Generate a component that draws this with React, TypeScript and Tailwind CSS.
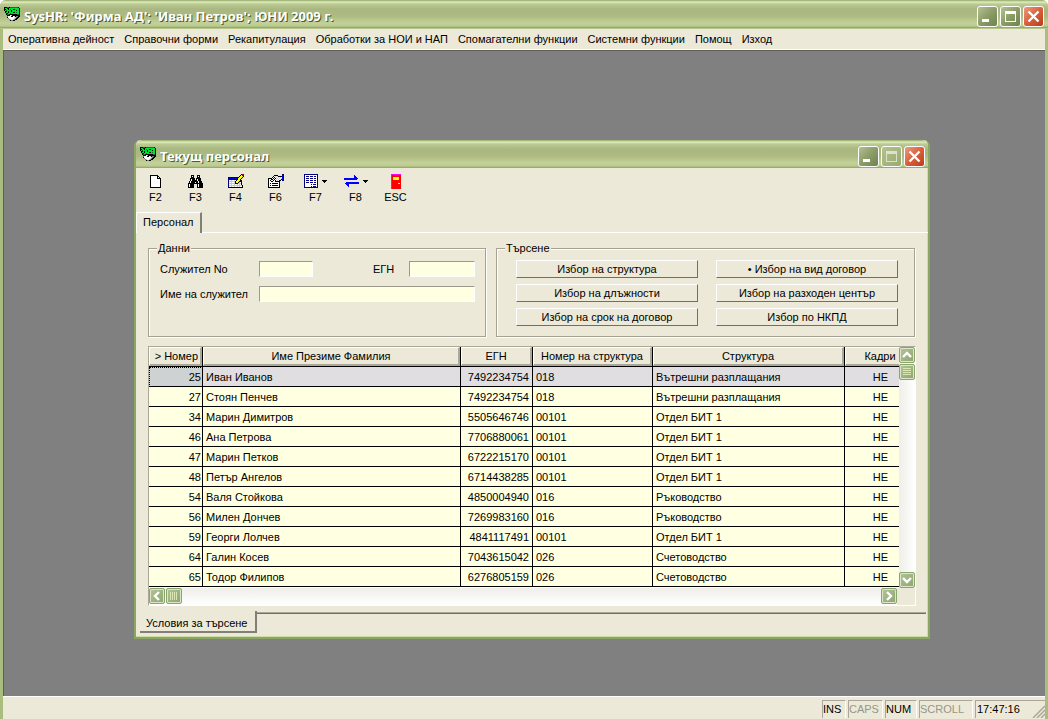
import React from 'react';
import clsx from 'clsx';

const PALETTE: Record<string, string> = {
  k: '#000000',
  w: '#ffffff',
  n: '#000080',
  b: '#0000ff',
  g: '#00e030',
  d: '#008020',
  s: '#808080',
  l: '#c8c8c8',
  y: '#ffff00',
  r: '#ff0000',
  m: '#ff00ff',
  p: '#800040',
};

const APP = [
  'kkkddkddddddddk.',
  'kggkkggggggggggk',
  'kkggkgdggkkggggk',
  'kgdggggkggggkggk',
  '.kkgkggkgggggggk',
  '.kggkggggkkgdggk',
  '..kkggdggggggggk',
  '..kddkkkkkkkkddk',
  '...kkkwlkkkkkkkk',
  '...swwwkkwlksskk',
  '...kwwwwwwwlskk.',
  '....swwwwwlskk..',
  '.....slwwlskk...',
  '......ksskk.....',
];

const PAGE = [
  'kkkkkkkk...',
  'kwwwwwwkk..',
  'kwwwwwwkwk.',
  'kwwwwwwkkkk',
  'kwwwwwwwwwk',
  'kwwwwwwwwwk',
  'kwwwwwwwwwk',
  'kwwwwwwwwwk',
  'kwwwwwwwwwk',
  'kwwwwwwwwwk',
  'kwwwwwwwwwk',
  'kwwwwwwwwwk',
  'kkkkkkkkkkk',
];

const FIND = [
  '...kkk...kkk...',
  '...kwk...kwk...',
  '...kkk...kkk...',
  '..kkkkk.kkkkk..',
  '..kwkkk.kwkkk..',
  '..kwkkkkkwkkk..',
  '.kwkkkkkkkwkkk.',
  '.kwkkkkwkkwkkk.',
  'kkkkkkkkkkkkkkk',
  'kwkkkk...kwkkkk',
  'kwkkkk...kwkkkk',
  'kwkkkk...kwkkkk',
  'kkkkkk...kkkkkk',
];

const EDIT = [
  '.............kpp',
  '............kypp',
  '...........kyyyk',
  'nnnnnnnnnnkyyyk.',
  'nbbnbbnbbkyyyk..',
  'nnnnnnnnnkyyk...',
  'nwwlwwlwkyyykn..',
  'nllllllkyyyknn..',
  'nwwlwwlkyyklwn..',
  'nllllllkkklllk..',
  'nwwlwwlwwlwlwk..',
  'nlllllllllllllk.',
  'nwwlwwlwwlwlwwk.',
  'kkkkkkkkkkkkkkk.',
];

const PROPS = [
  '..............nn',
  '......kkkk....bn',
  '.....kwlwlkkkkbn',
  '....kwkwlwlwlwbn',
  'kkkkwkwkwlwlwlbn',
  'kwwkkwkwlwlwlkbn',
  'kwkwwkwkwlwkk.nn',
  'kwwkkwwkkkkk....',
  'kwwwwwwwwwwk....',
  'kwkwkkkkkkwk....',
  'kwwwwwwwwwwk....',
  'kwkwkkkkkkwk....',
  'kwwwwwwwwwwk....',
  'kkkkkkkkkkkk....',
];

const FORM = [
  'nnnnnnnnnnnnnn',
  'nwwwwwwwwwwwwn',
  'nwnnnwnnnwnnwn',
  'nwwwwwwwwwwwwn',
  'nwnnnwnnnwnnwn',
  'nwwwwwwwwwwwwn',
  'nwnnnwnnnwnnwn',
  'nwwwwwwwwwwwwn',
  'nwnnnwnnnwnnwn',
  'nwwwwwwwwwwwwn',
  'nwwwwwwnwnnnwn',
  'nwwwwwwwwwwwwn',
  'nwwwwwwnwnnnwn',
  'nnnnnnnnnnnnnn',
];

const SWAP = [
  '..........b....',
  '..........bb...',
  '..........bbb..',
  'bbbbbbbbbbbbbb.',
  'bbbbbbbbbbbbb..',
  '...............',
  '...............',
  '..bbbbbbbbbbbbb',
  '.bbbbbbbbbbbbbb',
  '..bbb..........',
  '...bb..........',
  '....b..........',
];

const DOOR = [
  'mmmmmmmmmm',
  'mrrrrrrrrr',
  'mrrrrrrrrr',
  'mryyyyyyrr',
  'mryyyyyyrr',
  'mryyyyyyrr',
  'mrrrrrrrrr',
  'mrrrrrrrrr',
  'mrrrrrrrrr',
  'mrrrrrryyr',
  'mrrrrrrrrr',
  'mrrrrrrrrr',
  'mrrrrrrrrr',
  'mrrrrrrrrr',
  'mrrrrrrrrr',
];

const DROP = ['kkkkk', '.kkk.', '..k..'];

const PixelIcon = ({ rows }: { rows: string[] }) => (
  <svg width={rows[0].length} height={rows.length} shapeRendering="crispEdges" className="shrink-0" aria-hidden="true">
    {rows.flatMap((row, y) =>
      [...row].map((c, x) => (c === '.' ? null : <rect key={`${x}-${y}`} x={x} y={y} width="1" height="1" fill={PALETTE[c]} />))
    )}
  </svg>
);

const menu = [
  'Оперативна дейност',
  'Справочни форми',
  'Рекапитулация',
  'Обработки за НОИ и НАП',
  'Спомагателни функции',
  'Системни функции',
  'Помощ',
  'Изход',
];

const tools = [
  { key: 'F2', icon: PAGE, drop: false },
  { key: 'F3', icon: FIND, drop: false },
  { key: 'F4', icon: EDIT, drop: false },
  { key: 'F6', icon: PROPS, drop: false },
  { key: 'F7', icon: FORM, drop: true },
  { key: 'F8', icon: SWAP, drop: true },
  { key: 'ESC', icon: DOOR, drop: false },
];

const filters = [
  'Избор на структура',
  '• Избор на вид договор',
  'Избор на длъжности',
  'Избор на разходен център',
  'Избор на срок на договор',
  'Избор по НКПД',
];

const people = [
  ['25', 'Иван Иванов', '7492234754', '018', 'Вътрешни разплащания'],
  ['27', 'Стоян Пенчев', '7492234754', '018', 'Вътрешни разплащания'],
  ['34', 'Марин Димитров', '5505646746', '00101', 'Отдел БИТ 1'],
  ['46', 'Ана Петрова', '7706880061', '00101', 'Отдел БИТ 1'],
  ['47', 'Марин Петков', '6722215170', '00101', 'Отдел БИТ 1'],
  ['48', 'Петър Ангелов', '6714438285', '00101', 'Отдел БИТ 1'],
  ['54', 'Валя Стойкова', '4850004940', '016', 'Ръководство'],
  ['56', 'Милен Дончев', '7269983160', '016', 'Ръководство'],
  ['59', 'Георги Лолчев', '4841117491', '00101', 'Отдел БИТ 1'],
  ['64', 'Галин Косев', '7043615042', '026', 'Счетоводство'],
  ['65', 'Тодор Филипов', '6276805159', '026', 'Счетоводство'],
];

const status = [
  { text: 'INS', on: true, width: 'w-6' },
  { text: 'CAPS', on: false, width: 'w-[35px]' },
  { text: 'NUM', on: true, width: 'w-8' },
  { text: 'SCROLL', on: false, width: 'w-[54px]' },
];

const TitleBar = ({ title, maxDisabled }: { title: string; maxDisabled?: boolean }) => {
  const box = 'flex size-[21px] items-center justify-center rounded-[3px] border border-white';
  const green = 'bg-linear-to-br from-[#b4c193] via-[#8b9c67] to-[#6f8450]';
  return (
    <div className="flex h-7 items-center gap-1 rounded-t-md bg-[linear-gradient(#8fa668_0,#e2eeba_2px,#bccb93_4px,#a9b780_9px,#adbb82_16px,#c3d098_23px,#bccb92_26px,#8ba260_28px)] px-1">
      <PixelIcon rows={APP} />
      <h1 className="flex-1 truncate pt-1 text-[13px] leading-5 font-bold text-white font-['Noto_Sans',sans-serif] [text-shadow:1px_1px_0_#4d5a2c]">{title}</h1>
      <div className={clsx('flex gap-0.5 pt-1', maxDisabled && '-mr-px')}>
        <button aria-label="Минимизиране" className={clsx(box, green)}>
          <svg width="19" height="19" shapeRendering="crispEdges"><path d="M4 12h7v3H4z" fill="#fff" /></svg>
        </button>
        <button aria-label="Максимизиране" className={clsx(box, maxDisabled ? 'border-[#e3ecc8] bg-linear-to-br from-[#b4c28d] to-[#99aa70]' : green)}>
          <svg width="19" height="19" shapeRendering="crispEdges" opacity={maxDisabled ? 0.6 : 1}>
            <path d="M4 4h11v11H4zM5 7v7h9V7z" fill="#fff" fillRule="evenodd" />
          </svg>
        </button>
        <button aria-label="Затваряне" className={clsx(box, 'bg-linear-to-br from-[#eb9b80] via-[#d95f3c] to-[#b93c14]')}>
          <svg width="19" height="19"><path d="M4.5 4.5l10 10M14.5 4.5l-10 10" stroke="#fff" strokeWidth="2.4" /></svg>
        </button>
      </div>
    </div>
  );
};

const ScrollButton = ({ label, path, grip }: { label: string; path: string; grip?: boolean }) => (
  <button
    aria-label={label}
    className="size-4 shrink-0 rounded-xs border border-[#8ba66d] bg-linear-to-br from-[#b3c39a] to-[#8fa56e] shadow-[inset_0_0_0_1px_#dbe5c9]"
  >
    <svg width="14" height="14" fill="none" stroke={grip ? '#d9e6b4' : '#fff'} strokeWidth={grip ? 1 : 2.4}>
      <path d={path} />
    </svg>
  </button>
);

const field = 'h-4 min-w-0 border border-t-[#9d9a8c] border-l-[#9d9a8c] border-r-white border-b-white bg-[#ffffe1] px-0.5 outline-none';
const group = 'min-w-0 border border-[#a5a295] px-2 shadow-[1px_1px_0_#fff,inset_1px_1px_0_#fff]';
const head = 'h-5 border-b border-b-black border-r border-r-black p-0 font-normal';
const headFace = 'h-[19px] border-t border-l border-r-2 border-b-2 border-t-white border-l-white border-r-[#aca899] border-b-[#aca899] leading-4 whitespace-nowrap';
const cell = 'h-5 border-b border-r border-black px-[3px] pt-px pb-0 leading-[18px] whitespace-nowrap';

const PersonnelTable = () => (
  <div className="border border-t-[#aca899] border-l-[#aca899] border-r-white border-b-white">
    <div className="flex">
      <div className="min-w-0 flex-1 overflow-hidden bg-[#ffffe1] pb-px">
        {/* last column runs on under the scrollbar */}
        <table className="w-[calc(100%+18px)] table-fixed border-separate border-spacing-0">
          <colgroup>
            <col className="w-[54px]" />
            <col />
            <col className="w-[72px]" />
            <col className="w-[120px]" />
            <col className="w-[192px]" />
            <col className="w-[72px]" />
          </colgroup>
          <thead className="bg-[#ece9d8]">
            <tr>
              <th className={head}><div className={clsx(headFace, 'pr-0.5 text-right')}>&gt; Номер</div></th>
              {['Име Презиме Фамилия', 'ЕГН', 'Номер на структура', 'Структура', 'Кадри'].map((h) => (
                <th key={h} className={head}><div className={headFace}>{h}</div></th>
              ))}
            </tr>
          </thead>
          <tbody>
            {people.map(([num, name, egn, code, unit], i) => (
              <tr key={num} className={i === 0 ? 'bg-[#e0dee0]' : undefined}>
                <td className={clsx(cell, 'pr-px text-right', i === 0 && 'bg-[#cfd2d2] outline outline-dotted -outline-offset-1 outline-black')}>{num}</td>
                <td className={cell}>{name}</td>
                <td className={clsx(cell, 'text-right')}>{egn}</td>
                <td className={cell}>{code}</td>
                <td className={cell}>{unit}</td>
                <td className={clsx(cell, 'text-center')}>НЕ</td>
              </tr>
            ))}
          </tbody>
        </table>
      </div>
      <div className="flex w-4 flex-col gap-px bg-linear-to-r from-[#efeee8] to-white">
        <ScrollButton label="Нагоре" path="M3 9l4-4 4 4" />
        <ScrollButton label="Плъзгач" path="M3 3.5h8M3 5.5h8M3 7.5h8M3 9.5h8" grip />
        <div className="flex-1" />
        <ScrollButton label="Надолу" path="M3 5l4 4 4-4" />
      </div>
    </div>
    <div className="flex">
      <div className="flex h-[17px] flex-1 gap-px bg-linear-to-b from-[#efeee8] to-white">
        <ScrollButton label="Наляво" path="M9 3L5 7l4 4" />
        <ScrollButton label="Плъзгач" path="M3.5 3v8M5.5 3v8M7.5 3v8M9.5 3v8" grip />
        <div className="flex-1" />
        <ScrollButton label="Надясно" path="M5 3l4 4-4 4" />
      </div>
      <div className="w-[18px]" />
    </div>
  </div>
);

const PersonnelWindow = () => (
  <section className="absolute top-[89px] right-[115px] left-[130px] rounded-t-md border-r-2 border-b-2 border-l-2 border-[#8aa663] bg-[#ece9d8] shadow-[inset_-1px_-1px_0_#d0dba8]">
    <TitleBar title="Текущ персонал" maxDisabled />
    <div className="flex pt-1">
      {tools.map((t) => (
        <button key={t.key} className="flex h-9 w-10 flex-col items-center pr-px leading-[14px]">
          <span className="flex h-[18px] items-center gap-1">
            <PixelIcon rows={t.icon} />
            {t.drop && <PixelIcon rows={DROP} />}
          </span>
          {t.key}
        </button>
      ))}
    </div>
    <div className="mt-1 flex items-end">
      <button className="h-[21px] border-t border-r-2 border-l border-t-white border-l-white border-r-[#808076] px-1.5 pb-0.5">Персонал</button>
      <div className="h-px flex-1 bg-white" />
    </div>

    <div className="pt-[9px] pr-[13px] pl-3">
      <div className="grid grid-cols-[338px_1fr] gap-2.5">
        <fieldset className={clsx(group, 'h-[95px]')}>
          <legend className="bg-[#ece9d8] px-px leading-[13px]">Данни</legend>
          <div className="grid grid-cols-[99px_54px_1fr_66px] items-center gap-y-[9px] pt-1.5 pr-0.5 pl-[3px]">
            <label htmlFor="num">Служител No</label>
            <input id="num" className={field} />
            <label htmlFor="egn" className="pl-[60px]">ЕГН</label>
            <input id="egn" className={field} />
            <label htmlFor="name">Име на служител</label>
            <input id="name" className={clsx(field, 'col-span-3')} />
          </div>
        </fieldset>
        <fieldset className={clsx(group, 'h-[95px]')}>
          <legend className="bg-[#ece9d8] px-px leading-[13px]">Търсене</legend>
          <div className="grid grid-cols-2 gap-x-[18px] gap-y-1.5 pt-[5px] pr-2 pl-[11px]">
            {filters.map((f) => (
              <button key={f} className="h-[18px] border border-t-white border-l-white border-r-[#716f64] border-b-[#716f64] leading-4 whitespace-nowrap">
                {f}
              </button>
            ))}
          </div>
        </fieldset>
      </div>
      <div className="mt-[9px] -mr-px">
        <PersonnelTable />
      </div>
    </div>

    <div className="mt-1.5 flex items-start pr-0.5 pb-1 pl-1">
      <button className="-mt-px h-[22px] border-r-2 border-b-2 border-[#808076] pt-1 pr-2 pl-1.5">Условия за търсене</button>
      <div className="h-0.5 flex-1 border-t border-b border-t-[#aca899] border-b-[#716f64]" />
    </div>
  </section>
);

const App = () => (
  <div className="flex min-h-screen flex-col rounded-t-md bg-[#b5c78b] text-[11px] leading-[15px] text-black font-['Liberation_Sans',Arial,sans-serif]">
    <div className="pb-px">
      <TitleBar title="SysHR: 'Фирма АД'; 'Иван Петров'; ЮНИ 2009 г." />
    </div>
    <div className="flex flex-1 flex-col border-r-3 border-l-3 border-[#a9bd7f] bg-[#ece9d8]">
      <nav className="flex h-[21px] items-center gap-2.5 border-b border-white px-[5px]">
        {menu.map((m) => (
          <button key={m} className="whitespace-nowrap">{m}</button>
        ))}
      </nav>
      <main className="relative min-h-[600px] flex-1 border-t border-l border-[#5f5f5a] bg-[#808080]">
        <PersonnelWindow />
      </main>
      <footer className="flex h-[23px] items-end justify-end gap-0.5 border-t border-white pb-px">
        {status.map((s) => (
          <div
            key={s.text}
            className={clsx('h-[18px] border-t border-l border-r border-t-[#aca899] border-l-[#aca899] border-r-white leading-[17px]', s.width, !s.on && 'text-[#98958a]')}
          >
            {s.text}
          </div>
        ))}
        <div className="flex h-[18px] w-[70px] items-end justify-between border-t border-l border-[#aca899] pl-px leading-[17px]">
          17:47:16
          <svg width="13" height="13" stroke="#aca899" strokeWidth="1.5" aria-hidden="true">
            <path d="M1 13L13 1M5 13l8-8M9 13l4-4" />
          </svg>
        </div>
      </footer>
    </div>
  </div>
);

export default App;
